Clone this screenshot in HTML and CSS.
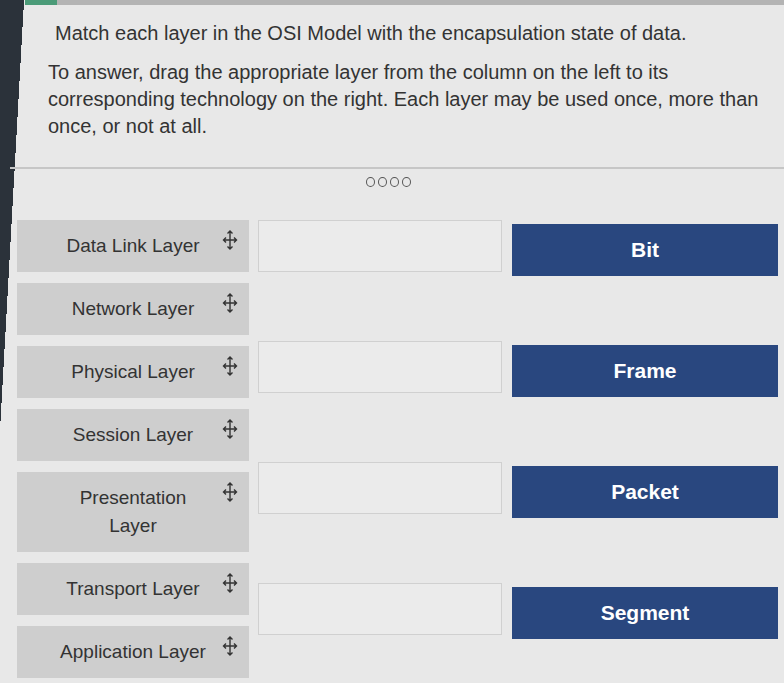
FILE: index.html
```html
<!DOCTYPE html>
<html lang="en">
<head>
    <meta charset="UTF-8">
    <meta name="viewport" content="width=device-width, initial-scale=1.0">
    <title>OSI Model - Drag and Drop</title>
    <link rel="stylesheet" href="styles.css">
</head>
<body>
    <div class="topbar"><span class="tab"></span></div>
    <main class="page">
        <h1 class="question">Match each layer in the OSI Model with the encapsulation state of data.</h1>
        <p class="instructions">To answer, drag the appropriate layer from the column on the left to its corresponding technology on the right. Each layer may be used once, more than once, or not at all.</p>
        <hr class="divider">
        <div class="pager">
            <span class="dot"></span><span class="dot"></span><span class="dot"></span><span class="dot"></span>
        </div>
        <div class="board">
            <ul class="choices">
                <li class="choice">Data Link Layer</li>
                <li class="choice">Network Layer</li>
                <li class="choice">Physical Layer</li>
                <li class="choice">Session Layer</li>
                <li class="choice">Presentation Layer</li>
                <li class="choice">Transport Layer</li>
                <li class="choice">Application Layer</li>
            </ul>
            <div class="answers">
                <div class="pair"><div class="slot"></div><div class="target">Bit</div></div>
                <div class="pair"><div class="slot"></div><div class="target">Frame</div></div>
                <div class="pair"><div class="slot"></div><div class="target">Packet</div></div>
                <div class="pair"><div class="slot"></div><div class="target">Segment</div></div>
            </div>
        </div>
    </main>
    <script>
        // every choice gets the same move handle
        const handle = `
            <svg class="move" viewBox="0 0 18 22" width="18" height="22">
                <path d="M9 2V20M3 11H15M6.5 4.5L9 2L11.5 4.5M6.5 17.5L9 20L11.5 17.5M5 8.5L2.5 11L5 13.5M13 8.5L15.5 11L13 13.5"
                      fill="none" stroke="#333" stroke-width="1.4"/>
            </svg>`;
        document.querySelectorAll('.choice').forEach(item => {
            item.insertAdjacentHTML('beforeend', handle);
        });
    </script>
</body>
</html>
```

FILE: styles.css
```css
html {
    background: #e8e8e8;
}
body {
    margin: 0;
    min-height: 683px;
    font-family: "Liberation Sans", Arial, sans-serif;
    color: #333;
    background: linear-gradient(93.2deg, #2b323a 24px, #e8e8e8 24px);
    overflow: hidden;
}
.topbar {
    height: 5px;
    margin-left: 25px;
    background: #b4b4b4;
}
.tab {
    display: block;
    width: 32px;
    height: 5px;
    background: #4b9b78;
}
.page {
    padding-top: 14px;
}
.question {
    font-size: 20px;
    font-weight: normal;
    margin: 0 20px 0 55px;
    line-height: 28px;
}
.instructions {
    font-size: 20px;
    line-height: 27px;
    margin: 12px 10px 0 48px;
}
.divider {
    border: none;
    border-top: 2px solid #c6c6c6;
    margin: 27px 0 0 10px;
}
.pager {
    display: flex;
    justify-content: center;
    gap: 3px;
    margin-top: 8px;
    padding-right: 8px;
}
.dot {
    width: 7px;
    height: 8px;
    border: 1.5px solid #555;
    border-radius: 50%;
}
.board {
    display: flex;
    margin-top: 33px;
    padding-left: 17px;
}
.choices {
    list-style: none;
    margin: 0;
    padding: 0;
    width: 232px;
    display: flex;
    flex-direction: column;
    gap: 11px;
}
.choice {
    position: relative;
    background: #cecece;
    font-size: 19px;
    line-height: 28px;
    padding: 12px 40px;
    text-align: center;
}
.move {
    position: absolute;
    top: 9px;
    right: 10px;
}
.answers {
    margin-left: 9px;
    display: flex;
    flex-direction: column;
    gap: 65px;
}
.pair {
    display: flex;
    gap: 10px;
}
.slot {
    width: 242px;
    height: 50px;
    border: 1px solid #d0d0d0;
    background: #ebebeb;
}
.target {
    width: 266px;
    height: 52px;
    margin-top: 4px;
    background: #29477f;
    color: #fff;
    font-weight: bold;
    font-size: 21px;
    display: flex;
    align-items: center;
    justify-content: center;
}
```
